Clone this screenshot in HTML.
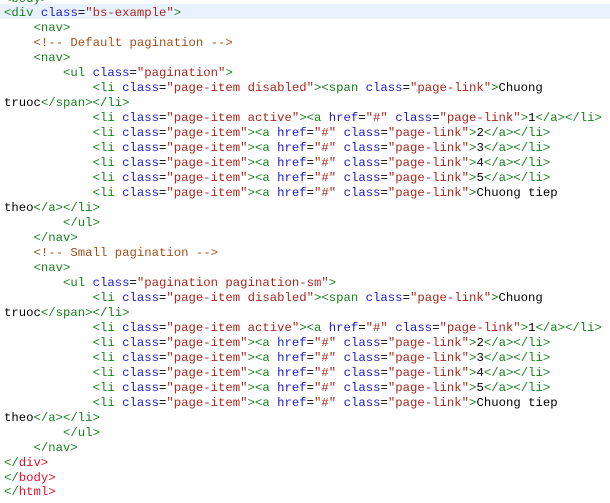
<!DOCTYPE html>
<html><head><style>
body{margin:0;background:#fff;width:610px;height:503px;overflow:hidden;position:relative}
pre{position:absolute;left:4px;top:-8.5px;margin:0;font-family:"Liberation Mono","DejaVu Sans Mono",monospace;font-size:12.3px;line-height:14.97px;color:#000}
.hl{position:absolute;left:0;top:4px;width:610px;height:15px;background:#e8f2fe}
.t{color:#18801e}.a{color:#1c1cc8}.v{color:#a8281e}.c{color:#a0521e}.r{color:#e0102a}
</style></head><body>
<div class="hl"></div>
<pre><span class="t">&lt;body&gt;</span>
<span class="t">&lt;div</span> <span class="a">class</span>=<span class="v">"bs-example"</span><span class="t">&gt;</span>
    <span class="t">&lt;nav&gt;</span>
    <span class="c">&lt;!-- Default pagination --&gt;</span>
    <span class="t">&lt;nav&gt;</span>
        <span class="t">&lt;ul</span> <span class="a">class</span>=<span class="v">"pagination"</span><span class="t">&gt;</span>
            <span class="t">&lt;li</span> <span class="a">class</span>=<span class="v">"page-item disabled"</span><span class="t">&gt;&lt;span</span> <span class="a">class</span>=<span class="v">"page-link"</span><span class="t">&gt;</span>Chuong
truoc<span class="t">&lt;/span&gt;&lt;/li&gt;</span>
            <span class="t">&lt;li</span> <span class="a">class</span>=<span class="v">"page-item active"</span><span class="t">&gt;&lt;a</span> <span class="a">href</span>=<span class="v">"#"</span> <span class="a">class</span>=<span class="v">"page-link"</span><span class="t">&gt;</span>1<span class="t">&lt;/a&gt;&lt;/li&gt;</span>
            <span class="t">&lt;li</span> <span class="a">class</span>=<span class="v">"page-item"</span><span class="t">&gt;&lt;a</span> <span class="a">href</span>=<span class="v">"#"</span> <span class="a">class</span>=<span class="v">"page-link"</span><span class="t">&gt;</span>2<span class="t">&lt;/a&gt;&lt;/li&gt;</span>
            <span class="t">&lt;li</span> <span class="a">class</span>=<span class="v">"page-item"</span><span class="t">&gt;&lt;a</span> <span class="a">href</span>=<span class="v">"#"</span> <span class="a">class</span>=<span class="v">"page-link"</span><span class="t">&gt;</span>3<span class="t">&lt;/a&gt;&lt;/li&gt;</span>
            <span class="t">&lt;li</span> <span class="a">class</span>=<span class="v">"page-item"</span><span class="t">&gt;&lt;a</span> <span class="a">href</span>=<span class="v">"#"</span> <span class="a">class</span>=<span class="v">"page-link"</span><span class="t">&gt;</span>4<span class="t">&lt;/a&gt;&lt;/li&gt;</span>
            <span class="t">&lt;li</span> <span class="a">class</span>=<span class="v">"page-item"</span><span class="t">&gt;&lt;a</span> <span class="a">href</span>=<span class="v">"#"</span> <span class="a">class</span>=<span class="v">"page-link"</span><span class="t">&gt;</span>5<span class="t">&lt;/a&gt;&lt;/li&gt;</span>
            <span class="t">&lt;li</span> <span class="a">class</span>=<span class="v">"page-item"</span><span class="t">&gt;&lt;a</span> <span class="a">href</span>=<span class="v">"#"</span> <span class="a">class</span>=<span class="v">"page-link"</span><span class="t">&gt;</span>Chuong tiep
theo<span class="t">&lt;/a&gt;&lt;/li&gt;</span>
        <span class="t">&lt;/ul&gt;</span>
    <span class="t">&lt;/nav&gt;</span>
    <span class="c">&lt;!-- Small pagination --&gt;</span>
    <span class="t">&lt;nav&gt;</span>
        <span class="t">&lt;ul</span> <span class="a">class</span>=<span class="v">"pagination pagination-sm"</span><span class="t">&gt;</span>
            <span class="t">&lt;li</span> <span class="a">class</span>=<span class="v">"page-item disabled"</span><span class="t">&gt;&lt;span</span> <span class="a">class</span>=<span class="v">"page-link"</span><span class="t">&gt;</span>Chuong
truoc<span class="t">&lt;/span&gt;&lt;/li&gt;</span>
            <span class="t">&lt;li</span> <span class="a">class</span>=<span class="v">"page-item active"</span><span class="t">&gt;&lt;a</span> <span class="a">href</span>=<span class="v">"#"</span> <span class="a">class</span>=<span class="v">"page-link"</span><span class="t">&gt;</span>1<span class="t">&lt;/a&gt;&lt;/li&gt;</span>
            <span class="t">&lt;li</span> <span class="a">class</span>=<span class="v">"page-item"</span><span class="t">&gt;&lt;a</span> <span class="a">href</span>=<span class="v">"#"</span> <span class="a">class</span>=<span class="v">"page-link"</span><span class="t">&gt;</span>2<span class="t">&lt;/a&gt;&lt;/li&gt;</span>
            <span class="t">&lt;li</span> <span class="a">class</span>=<span class="v">"page-item"</span><span class="t">&gt;&lt;a</span> <span class="a">href</span>=<span class="v">"#"</span> <span class="a">class</span>=<span class="v">"page-link"</span><span class="t">&gt;</span>3<span class="t">&lt;/a&gt;&lt;/li&gt;</span>
            <span class="t">&lt;li</span> <span class="a">class</span>=<span class="v">"page-item"</span><span class="t">&gt;&lt;a</span> <span class="a">href</span>=<span class="v">"#"</span> <span class="a">class</span>=<span class="v">"page-link"</span><span class="t">&gt;</span>4<span class="t">&lt;/a&gt;&lt;/li&gt;</span>
            <span class="t">&lt;li</span> <span class="a">class</span>=<span class="v">"page-item"</span><span class="t">&gt;&lt;a</span> <span class="a">href</span>=<span class="v">"#"</span> <span class="a">class</span>=<span class="v">"page-link"</span><span class="t">&gt;</span>5<span class="t">&lt;/a&gt;&lt;/li&gt;</span>
            <span class="t">&lt;li</span> <span class="a">class</span>=<span class="v">"page-item"</span><span class="t">&gt;&lt;a</span> <span class="a">href</span>=<span class="v">"#"</span> <span class="a">class</span>=<span class="v">"page-link"</span><span class="t">&gt;</span>Chuong tiep
theo<span class="t">&lt;/a&gt;&lt;/li&gt;</span>
        <span class="t">&lt;/ul&gt;</span>
    <span class="t">&lt;/nav&gt;</span>
<span class="t">&lt;/</span><span class="r">div&gt;</span>
<span class="t">&lt;/</span><span class="r">body&gt;</span>
<span class="t">&lt;/</span><span class="r">html&gt;</span></pre>
</body></html>
